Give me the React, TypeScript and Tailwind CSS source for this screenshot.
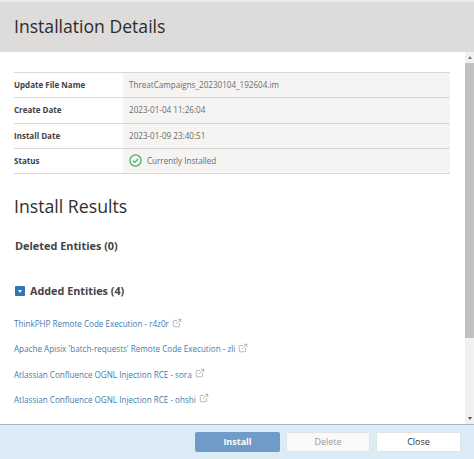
import { ExternalLink } from "lucide-react";

const rows = [
  { label: "Update File Name", value: "ThreatCampaigns_20230104_192604.im" },
  { label: "Create Date", value: "2023-01-04 11:26:04" },
  { label: "Install Date", value: "2023-01-09 23:40:51" },
];

const links = [
  "ThinkPHP Remote Code Execution - r4z0r",
  "Apache Apisix 'batch-requests' Remote Code Execution - zli",
  "Atlassian Confluence OGNL Injection RCE - sora",
  "Atlassian Confluence OGNL Injection RCE - ohshi",
];

function Row({ label, children }: { label: string; children: React.ReactNode }) {
  return (
    <div className="flex h-[25.25px] border-b border-[#d9d9d7]">
      <div className="flex w-[109px] shrink-0 items-center text-[8px] font-bold text-[#3f3f3f]">{label}</div>
      <div className="flex flex-1 items-center bg-[#f5f4f3] pl-[6px] text-[8.1px] text-[#6b6b6b]">{children}</div>
    </div>
  );
}

export default function App() {
  return (
    <div className="flex h-[459px] w-[474px] flex-col overflow-hidden bg-white font-['Open_Sans',sans-serif]">
      <header className="flex h-[52px] shrink-0 items-center border-t-2 border-[#e8e8e6] bg-[#dddcda] pl-[14px]">
        <h1 className="text-[17.6px] leading-none text-[#2b2b2b]">Installation Details</h1>
      </header>

      <div className="flex min-h-0 flex-1">
        <main className="min-w-0 flex-1 pl-[14px] pr-[15px] pt-[20px]">
          <div className="border-t border-[#d9d9d7]">
            {rows.map((row) => (
              <Row key={row.label} label={row.label}>
                {row.value}
              </Row>
            ))}
            <Row label="Status">
              <svg viewBox="0 0 14 14" className="mr-[5px] h-[13px] w-[13px]" fill="none">
                <circle cx="7" cy="7" r="6" stroke="#3fb55f" strokeWidth="1.4" />
                <path d="M4.2 7.2 6.2 9.1 9.9 5.2" stroke="#3fb55f" strokeWidth="1.4" />
              </svg>
              Currently Installed
            </Row>
          </div>

          <h2 className="mt-[20px] text-[17.7px] leading-[24px] text-[#2f2f2f]">Install Results</h2>
          <h3 className="mt-[21px] pl-[1px] text-[10.9px] leading-[14px] font-bold text-[#444444]">Deleted Entities (0)</h3>

          <div className="mt-[31px] flex items-center pl-[1px]">
            <span className="mr-[5px] flex h-[10px] w-[10px] items-center justify-center rounded-[1px] bg-[#2f74b5]">
              <span className="h-0 w-0 border-x-[2.5px] border-t-[3.5px] border-x-transparent border-t-white" />
            </span>
            <h3 className="text-[10.8px] leading-[14px] font-bold text-[#444444]">Added Entities (4)</h3>
          </div>

          <ul className="mt-[20px] flex flex-col gap-[13.3px]">
            {links.map((link) => (
              <li key={link} className="flex h-[12px] items-center text-[8.1px] text-[#3f7cae]">
                {link}
                <ExternalLink className="mb-[3px] ml-[3px] text-[#808080]" size={10} strokeWidth={1.3} />
              </li>
            ))}
          </ul>
        </main>

        <div className="flex w-[9px] shrink-0 flex-col bg-[#f1f1f1]">
          <div className="flex h-[11px] items-center justify-center">
            <span className="h-0 w-0 border-x-[2.5px] border-b-[3px] border-x-transparent border-b-[#777777]" />
          </div>
          <div className="h-[275px] bg-[#c1c1c1]" />
          <div className="flex-1" />
          <div className="flex h-[11px] items-center justify-center">
            <span className="h-0 w-0 border-x-[2.5px] border-t-[3px] border-x-transparent border-t-[#555555]" />
          </div>
        </div>
      </div>

      <footer className="flex h-[35px] shrink-0 items-start justify-end gap-[6px] border-t border-[#a9b4bc] bg-[#dbecf7] pr-[13px] pt-[7px]">
        <button className="h-[20px] w-[85px] rounded-[2px] bg-[#6f9bc9] text-[9px] font-bold text-white">Install</button>
        <button className="h-[20px] w-[84px] rounded-[2px] border border-[#e3e3e3] bg-[#f9f9f9] text-[9px] text-[#9a9a9a]">Delete</button>
        <button className="h-[20px] w-[85px] rounded-[2px] border border-[#e3e3e3] bg-white text-[9px] text-[#333333]">Close</button>
      </footer>
    </div>
  );
}
